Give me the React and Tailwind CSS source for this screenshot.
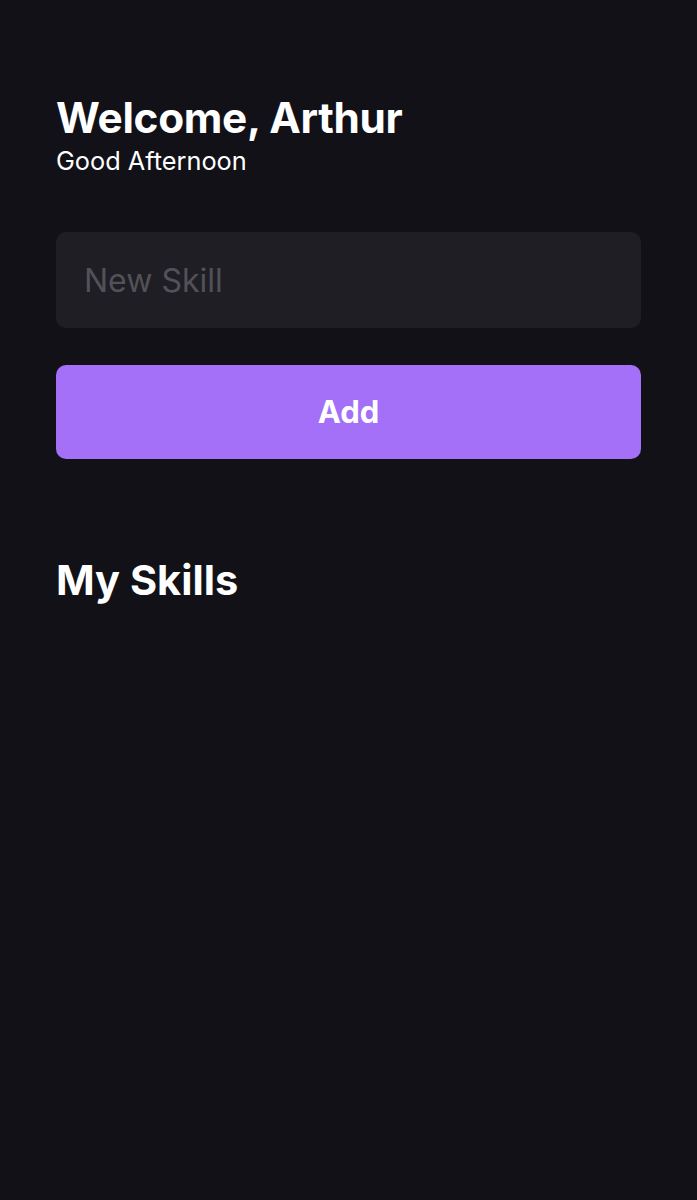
import React, { useState } from 'react';

function App() {
  const [skill, setSkill] = useState('');
  const [skills, setSkills] = useState([]);

  const addSkill = () => {
    if (!skill.trim()) return;
    setSkills([...skills, skill.trim()]);
    setSkill('');
  };

  return (
    <div
      className="min-h-[1200px] w-full bg-[#121117] px-[56px] pt-[92px]"
      style={{ fontFamily: 'Inter, "Noto Sans", sans-serif' }}
    >
      <h1 className="text-[42.3px] font-bold leading-[52px] text-white tracking-[-0.3px]">Welcome, Arthur</h1>
      <p className="mt-[2px] text-[25.3px] leading-[30px] text-white">Good Afternoon</p>

      <input
        value={skill}
        onChange={(e) => setSkill(e.target.value)}
        placeholder="New Skill"
        className="mt-[56px] h-[96px] w-full rounded-[10px] bg-[#1f1e25] px-[28px] text-[32px] text-white placeholder:text-[#525157] outline-none"
      />

      <button
        onClick={addSkill}
        className="mt-[37px] flex h-[94px] w-full items-center justify-center rounded-[10px] bg-[#a370f7] text-[31px] font-bold text-white"
      >
        Add
      </button>

      <h2 className="mt-[95px] text-[41.5px] font-bold leading-[52px] text-white">My Skills</h2>

      <div className="mt-6 flex flex-col gap-4">
        {skills.map((s, i) => (
          <div key={i} className="rounded-[10px] bg-[#1f1e25] px-7 py-6 text-[28px] font-bold text-white">
            {s}
          </div>
        ))}
      </div>
    </div>
  );
}

export default App;
